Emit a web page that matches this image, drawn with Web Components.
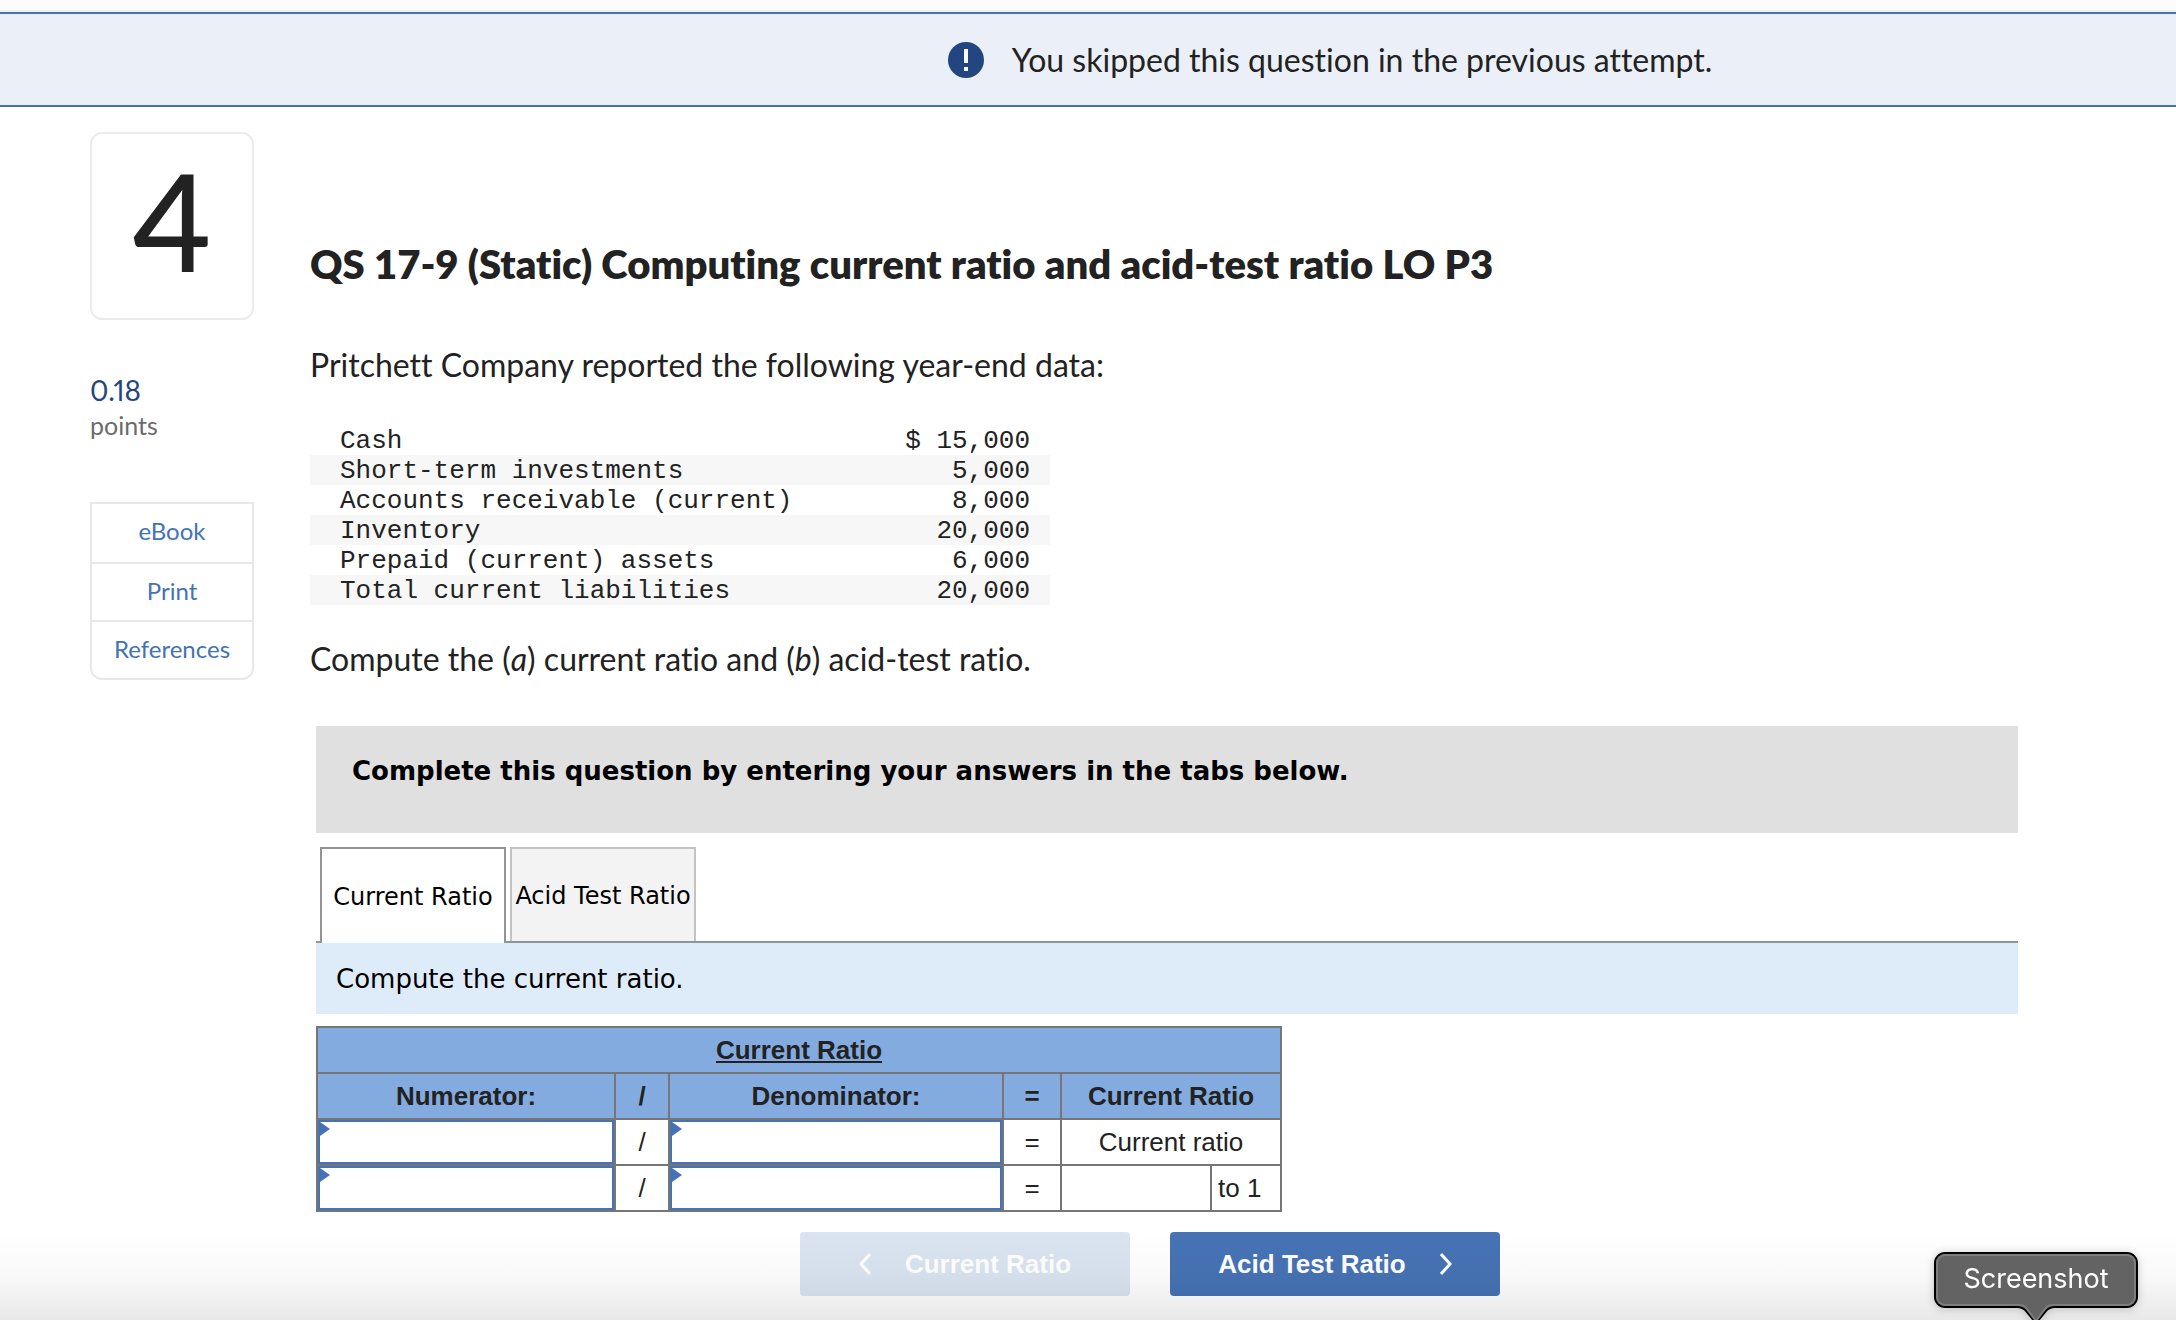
<!DOCTYPE html>
<html lang="en">
<head>
<meta charset="utf-8">
<title>Question 4</title>
<style>
  html, body { margin: 0; height: 100%; }
  body { background: #fff; color: #222; font-family: Lato, "Open Sans", sans-serif; font-variant-ligatures: none; overflow: hidden; }
</style>
</head>
<body>
<assignment-page></assignment-page>
<script>
const define = (name, html) => {
  const template = document.createElement('template');
  template.innerHTML = html;
  customElements.define(name, class extends HTMLElement {
    constructor() {
      super();
      this.attachShadow({ mode: 'open' }).append(template.content.cloneNode(true));
    }
  });
};

define('status-banner', `
<style>
  :host { display: flex; justify-content: center; align-items: center; gap: 28px; height: 91px;
    background: #ebeff7; border: solid #4373b5; border-width: 2px 0;
    font-size: 32px; line-height: 40px; padding-left: 484px; }
  svg { width: 36px; height: 36px; flex: none; }
</style>
<svg viewBox="0 0 36 36" aria-hidden="true"><circle cx="18" cy="18" r="18" fill="#234680"/><path d="M16 7h4v14h-4zM16 25h4v4h-4z" fill="#fff"/></svg>
<span><slot></slot></span>`);

define('question-sidebar', `
<style>
  :host { display: block; width: 164px; flex: none; }
  .number { box-sizing: border-box; height: 188px; border: 2px solid #ebebeb; border-radius: 12px;
    text-align: center; font-size: 136px; line-height: 172px; font-weight: 500; }
  .points { margin: 51px 0 0; font-size: 28px; line-height: 38px; color: #234680; font-variant-numeric: proportional-nums; }
  .unit { margin: 0; font-size: 25px; line-height: 32px; color: #6b6b6b; }
  nav { margin-top: 61px; border: 2px solid #e8e8e8; border-radius: 0 0 12px 12px; display: flex; flex-direction: column; }
  a { box-sizing: border-box; height: 58px; font-size: 24px; line-height: 54px; text-align: center; text-decoration: none; color: #4373b5; }
  a + a { border-top: 2px solid #e8e8e8; }
</style>
<div class="number"><slot name="number"></slot></div>
<p class="points"><slot name="points"></slot></p>
<p class="unit">points</p>
<nav><a href="#ebook">eBook</a><a href="#print">Print</a><a href="#references">References</a></nav>`);

define('account-data', `
<style>
  :host { display: block; }
  table { border-collapse: collapse; width: 740px; font: 26px/28px "Liberation Mono", monospace; }
  th, td { padding: 2px 20px 0 30px; font-weight: normal; text-align: left; }
  td { text-align: right; white-space: pre; }
  tr:nth-child(even) { background: #f7f7f7; }
</style>
<table><tbody>
<tr><th scope="row">Cash</th><td>$ 15,000</td></tr>
<tr><th scope="row">Short-term investments</th><td>5,000</td></tr>
<tr><th scope="row">Accounts receivable (current)</th><td>8,000</td></tr>
<tr><th scope="row">Inventory</th><td>20,000</td></tr>
<tr><th scope="row">Prepaid (current) assets</th><td>6,000</td></tr>
<tr><th scope="row">Total current liabilities</th><td>20,000</td></tr>
</tbody></table>`);

define('answer-tabs', `
<style>
  :host { display: block; color: #000; font-family: "DejaVu Sans", sans-serif; }
  .intro { margin: 0; background: #e0e0e0; padding: 28px 36px 45px; font-size: 26px; line-height: 34px; font-weight: bold; }
  .tabs { display: flex; gap: 4px; margin-top: 14px; padding: 0 4px; border-bottom: 2px solid #949494; }
  button { box-sizing: border-box; width: 186px; height: 94px; margin: 0; padding: 2px 0 0; border: 2px solid #c3c3c3; border-bottom: 0;
    background: #f3f3f3; color: #000; font: 24px/30px "DejaVu Sans", sans-serif; white-space: nowrap; display: flex; align-items: center; justify-content: center; }
  button[aria-selected=true] { background: #fff; border-color: #949494; height: 96px; margin-bottom: -2px; }
  .prompt { margin: 0; background: #deebf9; padding: 19px 20px 18px; font-size: 26px; line-height: 34px; }
</style>
<p class="intro">Complete this question by entering your answers in the tabs below.</p>
<div class="tabs" role="tablist"><button role="tab" aria-selected="true">Current Ratio</button><button role="tab" aria-selected="false">Acid Test Ratio</button></div>
<p class="prompt">Compute the current ratio.</p>
<slot></slot>`);

customElements.define('entry-field', class extends HTMLElement {
  constructor() {
    super();
    this.attachShadow({ mode: 'open' }).innerHTML = `
<style>
  :host { display: block; position: relative; }
  input { display: block; box-sizing: border-box; width: 100%; height: 44px; margin: 0; padding: 0 12px; border: 2px solid #4673b5; border-radius: 0; background: #fff; font: 26px "Liberation Sans", sans-serif; outline: 0; }
  svg { position: absolute; left: 2px; top: 2px; width: 10px; height: 14px; pointer-events: none; }
</style>
<input type="text" aria-label="${this.getAttribute('name') || ''}">
<svg viewBox="0 0 10 14" aria-hidden="true"><path d="M0 0L10 7 0 14z" fill="#4673b5"/></svg>`;
  }
  static get observedAttributes() { return ['name']; }
  attributeChangedCallback(_, __, value) {
    this.shadowRoot.querySelector('input').setAttribute('aria-label', value);
  }
});

define('ratio-table', `
<style>
  :host { display: block; margin-top: 12px; color: #222; }
  table { border-collapse: collapse; table-layout: fixed; width: 966px; font: 26px/30px "Liberation Sans", sans-serif; text-align: center; }
  th, td { border: 2px solid #767676; padding: 0; height: 44px; background: #fff; }
  th { background: #84abe0; }
  .unit { text-align: left; padding-left: 6px; }
  input { display: block; box-sizing: border-box; width: 100%; height: 44px; border: 0; padding: 0 10px; background: #fff; font: inherit; text-align: right; }
</style>
<table>
<colgroup><col style="width:298px"><col style="width:54px"><col style="width:334px"><col style="width:58px"><col style="width:150px"><col style="width:70px"></colgroup>
<thead>
<tr><th colspan="6"><u>Current Ratio</u></th></tr>
<tr><th>Numerator:</th><th>/</th><th>Denominator:</th><th>=</th><th colspan="2">Current Ratio</th></tr>
</thead>
<tbody>
<tr><td><entry-field name="Numerator name"></entry-field></td><td>/</td><td><entry-field name="Denominator name"></entry-field></td><td>=</td><td colspan="2">Current ratio</td></tr>
<tr><td><entry-field name="Numerator amount"></entry-field></td><td>/</td><td><entry-field name="Denominator amount"></entry-field></td><td>=</td><td><input type="text" aria-label="Current ratio result" readonly></td><td class="unit">to 1</td></tr>
</tbody>
</table>`);

define('tab-pager', `
<style>
  :host { display: flex; justify-content: center; gap: 40px; margin-top: 20px; padding-right: 34px; }
  button { box-sizing: border-box; width: 330px; height: 64px; border: 0; border-radius: 4px; padding: 0; display: flex; align-items: center; justify-content: center;
    gap: 34px; background: #4673b5; color: #fff; font: bold 26px/30px "Liberation Sans", sans-serif; }
  button:disabled { background: #dae4f1; }
  svg { width: 12px; height: 22px; fill: none; stroke: #fff; stroke-width: 3; }
</style>
<button disabled><svg viewBox="0 0 12 22" aria-hidden="true"><path d="M11 1L2 11l9 10"/></svg>Current Ratio</button>
<button>Acid Test Ratio<svg viewBox="0 0 12 22" aria-hidden="true"><path d="M1 1l9 10L1 21"/></svg></button>`);

define('dock-tooltip', `
<style>
  :host { position: absolute; right: 38px; bottom: 12px; width: 204px; height: 56px; box-sizing: border-box; color: #fff;
    font: 27px/54px Inter, sans-serif; text-align: center; filter: drop-shadow(0 1px 4px rgba(0,0,0,.2)); }
  svg { position: absolute; left: 0; top: 0; width: 204px; height: 72px; }
  span { position: relative; }
</style>
<svg viewBox="0 0 204 72" aria-hidden="true"><path d="M11 1h182a10 10 0 0 1 10 10v34a10 10 0 0 1-10 10h-72q-6 0-9 4l-10 12-10-12q-3-4-9-4H11A10 10 0 0 1 1 45V11A10 10 0 0 1 11 1z" fill="#636363" stroke="#000" stroke-width="2"/><path d="M11 3h182a8 8 0 0 1 8 8v34a8 8 0 0 1-8 8h-74q-5 0-8 4l-9 12-9-12q-3-4-8-4H11a8 8 0 0 1-8-8V11a8 8 0 0 1 8-8z" fill="none" stroke="#7e7e7e" stroke-width="2"/></svg>
<span><slot></slot></span>`);

define('assignment-page', `
<style>
  :host { display: block; position: relative; min-height: 100vh; padding-top: 12px; background: linear-gradient(#fcfcfc 10px, #f1f1f1 10px 12px, #fff 12px); box-sizing: border-box; overflow: hidden; }
  .layout { display: flex; gap: 56px; padding: 25px 158px 0 90px; }
  main { flex: 1; min-width: 0; padding-top: 109px; }
  h1 { margin: 0; font-size: 40px; line-height: 46px; font-weight: 800; }
  p { margin: 0; font-size: 32px; line-height: 40px; }
  .lead { margin-top: 58px; }
  account-data { margin-top: 40px; }
  .task { margin-top: 34px; }
  answer-tabs { margin: 47px 0 0 6px; }
  .fade { position: absolute; inset: auto 0 0; height: 90px; background: linear-gradient(rgba(0,0,0,0), rgba(0,0,0,.025) 50%, rgba(0,0,0,.09)); pointer-events: none; }
</style>
<status-banner>You skipped this question in the previous attempt.</status-banner>
<div class="layout">
  <question-sidebar><span slot="number">4</span><span slot="points">0.18</span></question-sidebar>
  <main>
    <h1>QS 17-9 (Static) Computing current ratio and acid-test ratio LO P3</h1>
    <p class="lead">Pritchett Company reported the following year-end data:</p>
    <account-data></account-data>
    <p class="task">Compute the (<i>a</i>) current ratio and (<i>b</i>) acid-test ratio.</p>
    <answer-tabs><ratio-table></ratio-table><tab-pager></tab-pager></answer-tabs>
  </main>
</div>
<div class="fade"></div>
<dock-tooltip>Screenshot</dock-tooltip>`);
</script>
</body>
</html>
